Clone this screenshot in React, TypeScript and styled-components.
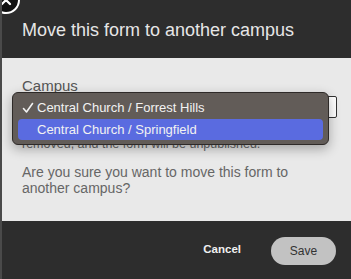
import React from "react";
import styled, { createGlobalStyle } from "styled-components";

const GlobalStyle = createGlobalStyle`
  html, body {
    margin: 0;
    padding: 0;
    background: #2b2b2b;
    overflow: hidden;
  }
  body {
    font-family: "Liberation Sans", Arial, sans-serif;
  }
`;

const Dialog = styled.div`
  position: relative;
  width: 351px;
  height: 279px;
  display: flex;
  flex-direction: column;
  border-left: 2px solid #4a4a4a;
  box-sizing: border-box;
  overflow: hidden;
`;

const CloseButton = styled.div`
  position: absolute;
  left: -10px;
  top: -14px;
  width: 24px;
  height: 24px;
  border-radius: 50%;
  background: #111;
  border: 2px solid #fff;
  display: flex;
  align-items: center;
  justify-content: center;
`;

const Header = styled.div`
  height: 58px;
  background: #2d2d2d;
  display: flex;
  align-items: center;
  padding: 0 20px;
  box-sizing: border-box;
`;

const Title = styled.h2`
  margin: 0;
  font-size: 18px;
  font-weight: normal;
  color: #e6e6e6;
  padding-top: 2px;
`;

const Body = styled.div`
  position: relative;
  height: 163px;
  background: #e9e9e9;
  padding: 18px 14px 0 20px;
  box-sizing: border-box;
`;

const Label = styled.div`
  font-size: 15px;
  color: #555;
  line-height: 20px;
`;

const Select = styled.div`
  height: 20px;
  border: 1px solid #333;
  border-radius: 2px;
  background: #fff;
`;

const Help = styled.p`
  margin: 2px 0 0;
  font-size: 12.5px;
  line-height: 16px;
  color: #666;
  white-space: nowrap;
`;

const Question = styled.p`
  margin: 12px 0 0;
  font-size: 14px;
  line-height: 16px;
  color: #666;
  padding-right: 30px;
`;

const Menu = styled.div`
  position: absolute;
  left: 10px;
  top: 34px;
  width: 317px;
  height: 53px;
  box-sizing: border-box;
  background: #625c58;
  border: 1px solid #2e2a28;
  border-radius: 6px;
  padding: 4px 5px;
  box-shadow: 0 4px 12px rgba(0, 0, 0, 0.3);
  display: flex;
  flex-direction: column;
  gap: 1px;
`;

const MenuItem = styled.div<{ $active?: boolean }>`
  height: 21px;
  display: flex;
  align-items: center;
  padding-left: 19px;
  position: relative;
  border-radius: 4px;
  background: ${(p) => (p.$active ? "#5a6be0" : "transparent")};
  color: #f2f2f2;
  font-size: 13px;
`;

const Check = styled.svg`
  position: absolute;
  left: 4px;
  top: 5px;
`;

const Footer = styled.div`
  flex: 1;
  background: #2d2d2d;
  display: flex;
  align-items: center;
  justify-content: flex-end;
  gap: 30px;
  padding: 0 15px 0 0;
`;

const CancelButton = styled.button`
  background: none;
  border: none;
  color: #f0f0f0;
  font-family: inherit;
  font-size: 11.5px;
  font-weight: bold;
  padding: 0;
  margin-bottom: 2px;
`;

const SaveButton = styled.button`
  width: 65px;
  height: 28px;
  border-radius: 14px;
  border: none;
  background: #c2c2c2;
  color: #333;
  font-family: inherit;
  font-size: 12px;
  margin-top: 1px;
`;

export default function App() {
  return (
    <>
      <GlobalStyle />
      <Dialog>
        <Header>
          <Title>Move this form to another campus</Title>
        </Header>
        <Body>
          <Label>Campus</Label>
          <Select />
          <Help>
            Settings specific to the current campus will be
            <br />
            removed, and the form will be unpublished.
          </Help>
          <Question>Are you sure you want to move this form to another campus?</Question>
          <Menu>
            <MenuItem>
              <Check width="12" height="12" viewBox="0 0 12 12">
                <path d="M1.5 6.5 L4.5 10 L10.5 1.5" stroke="#f2f2f2" strokeWidth="1.6" fill="none" strokeLinecap="round" strokeLinejoin="round" />
              </Check>
              Central Church / Forrest Hills
            </MenuItem>
            <MenuItem $active>Central Church / Springfield</MenuItem>
          </Menu>
        </Body>
        <Footer>
          <CancelButton>Cancel</CancelButton>
          <SaveButton>Save</SaveButton>
        </Footer>
        <CloseButton>
          <svg width="14" height="14" viewBox="0 0 14 14">
            <path d="M3 3 L11 11 M11 3 L3 11" stroke="#fff" strokeWidth="2.2" strokeLinecap="round" />
          </svg>
        </CloseButton>
      </Dialog>
    </>
  );
}
